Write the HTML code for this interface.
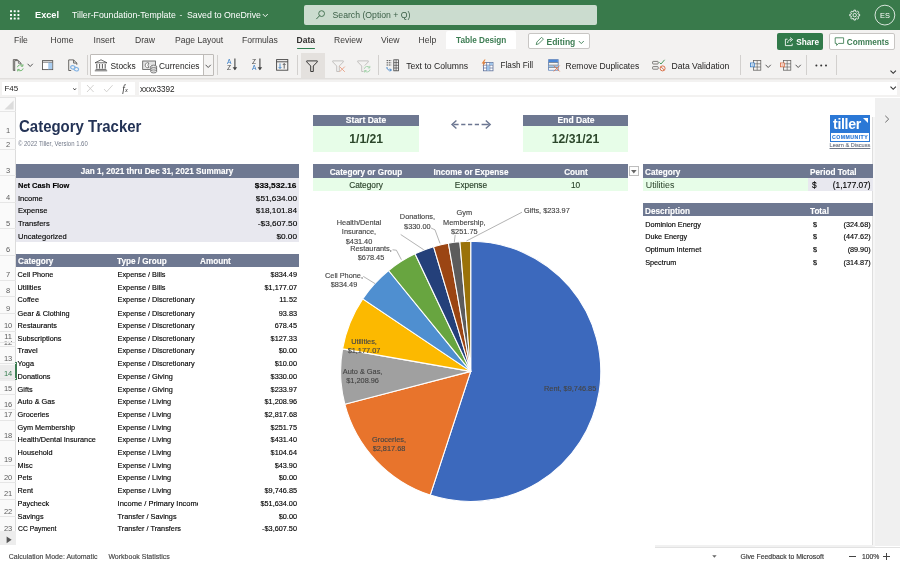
<!DOCTYPE html>
<html><head><meta charset="utf-8"><title>Excel</title>
<style>
html,body{margin:0;padding:0;}
body{width:900px;height:563px;overflow:hidden;position:relative;background:#fff;font-family:"Liberation Sans", sans-serif;}
.t{position:absolute;white-space:nowrap;}
.s{-webkit-text-stroke:0.14px;}
.r{position:absolute;}
svg{position:absolute;overflow:visible;}
</style></head><body><div id="app" style="position:absolute;left:0;top:0;width:900px;height:563px;will-change:transform;">

<div class="r" style="left:0px;top:0px;width:900px;height:30px;background:#397a4b;"></div>
<svg width="900" height="30" style="left:0;top:0"><rect x="10.0" y="10.2" width="2" height="2" rx="0.4" fill="#fff"/><rect x="10.0" y="13.9" width="2" height="2" rx="0.4" fill="#fff"/><rect x="10.0" y="17.6" width="2" height="2" rx="0.4" fill="#fff"/><rect x="13.7" y="10.2" width="2" height="2" rx="0.4" fill="#fff"/><rect x="13.7" y="13.9" width="2" height="2" rx="0.4" fill="#fff"/><rect x="13.7" y="17.6" width="2" height="2" rx="0.4" fill="#fff"/><rect x="17.4" y="10.2" width="2" height="2" rx="0.4" fill="#fff"/><rect x="17.4" y="13.9" width="2" height="2" rx="0.4" fill="#fff"/><rect x="17.4" y="17.6" width="2" height="2" rx="0.4" fill="#fff"/></svg>
<div class="t" style="left:35px;top:9.0px;font-size:9.2px;line-height:12px;font-weight:bold;color:#fff;">Excel</div>
<div class="t" style="left:72px;top:9.0px;font-size:8.75px;line-height:12px;font-weight:normal;color:#fff;">Tiller-Foundation-Template</div>
<div class="t" style="left:179.5px;top:9.0px;font-size:8.75px;line-height:12px;font-weight:normal;color:#e6f0e9;">-</div>
<div class="t" style="left:187px;top:9.0px;font-size:8.75px;line-height:12px;font-weight:normal;color:#fff;">Saved to OneDrive</div>
<svg width="8" height="6" style="left:262px;top:13px"><path d="M0.8 1 L3.3 3.6 L5.8 1" fill="none" stroke="#fff" stroke-width="0.9"/></svg>
<div class="r" style="left:304px;top:5px;width:293px;height:20px;background:#cbdccf;border-radius:2px;"></div>
<svg width="12" height="12" style="left:314.8px;top:9.2px"><circle cx="6.6" cy="4.6" r="2.9" fill="none" stroke="#3b6b4a" stroke-width="0.9"/><path d="M4.5 6.8 L1.6 9.8" stroke="#3b6b4a" stroke-width="1" stroke-linecap="round"/></svg>
<div class="t" style="left:332.5px;top:9.0px;font-size:8.7px;line-height:12px;font-weight:normal;color:#3b5f47;">Search (Option + Q)</div>
<svg width="900" height="30" style="left:0;top:0"><g transform="translate(854.7,15.1)"><path d="M-0.96 -3.47 L-0.85 -4.93 L0.85 -4.93 L0.96 -3.47 L1.77 -3.13 L2.89 -4.08 L4.08 -2.89 L3.13 -1.77 L3.47 -0.96 L4.93 -0.85 L4.93 0.85 L3.47 0.96 L3.13 1.77 L4.08 2.89 L2.89 4.08 L1.77 3.13 L0.96 3.47 L0.85 4.93 L-0.85 4.93 L-0.96 3.47 L-1.77 3.13 L-2.89 4.08 L-4.08 2.89 L-3.13 1.77 L-3.47 0.96 L-4.93 0.85 L-4.93 -0.85 L-3.47 -0.96 L-3.13 -1.77 L-4.08 -2.89 L-2.89 -4.08 L-1.77 -3.13 Z" fill="none" stroke="#fff" stroke-width="0.85" stroke-linejoin="round"/><circle r="1.7" fill="none" stroke="#fff" stroke-width="0.85"/></g><circle cx="884.9" cy="15.1" r="9.9" fill="none" stroke="#fff" stroke-width="0.8"/></svg>
<div class="t" style="left:734.9px;width:300px;text-align:center;top:9.5px;font-size:7.4px;line-height:12px;font-weight:normal;color:#fff;">ES</div>
<div class="r" style="left:0px;top:30px;width:900px;height:67px;background:#f3f2f1;"></div>
<div class="t" style="left:14px;top:34.0px;font-size:8.6px;line-height:12px;font-weight:normal;color:#3b3a39;">File</div>
<div class="t" style="left:50.5px;top:34.0px;font-size:8.6px;line-height:12px;font-weight:normal;color:#3b3a39;">Home</div>
<div class="t" style="left:93.5px;top:34.0px;font-size:8.6px;line-height:12px;font-weight:normal;color:#3b3a39;">Insert</div>
<div class="t" style="left:135px;top:34.0px;font-size:8.6px;line-height:12px;font-weight:normal;color:#3b3a39;">Draw</div>
<div class="t" style="left:175px;top:34.0px;font-size:8.6px;line-height:12px;font-weight:normal;color:#3b3a39;">Page Layout</div>
<div class="t" style="left:242px;top:34.0px;font-size:8.6px;line-height:12px;font-weight:normal;color:#3b3a39;">Formulas</div>
<div class="t" style="left:334px;top:34.0px;font-size:8.6px;line-height:12px;font-weight:normal;color:#3b3a39;">Review</div>
<div class="t" style="left:381px;top:34.0px;font-size:8.6px;line-height:12px;font-weight:normal;color:#3b3a39;">View</div>
<div class="t" style="left:418.5px;top:34.0px;font-size:8.6px;line-height:12px;font-weight:normal;color:#3b3a39;">Help</div>
<div class="t" style="left:296.6px;top:34.0px;font-size:8.5px;line-height:12px;font-weight:bold;color:#323130;">Data</div>
<div class="r" style="left:296.5px;top:47.8px;width:18.6px;height:1.7px;background:#2e7d4f;border-radius:1px;"></div>
<div class="r" style="left:446.3px;top:31px;width:69.4px;height:18.4px;background:#fff;border-radius:2px 2px 0 0;"></div>
<div class="t" style="left:456px;top:34.5px;font-size:8.2px;line-height:12px;font-weight:bold;color:#3d7d53;">Table Design</div>
<div class="r" style="left:528.3px;top:32.5px;width:61.3px;height:16.9px;background:#fff;border:0.8px solid #c8c6c4;border-radius:2px;box-sizing:border-box;"></div>
<svg width="10" height="10" style="left:535px;top:36px"><path d="M1.2 8.6 L1.9 6 L6.6 1.3 L8.4 3.1 L3.7 7.8 Z" fill="none" stroke="#3d7d53" stroke-width="0.85" stroke-linejoin="round"/></svg>
<div class="t" style="left:546.5px;top:36.0px;font-size:8.5px;line-height:12px;font-weight:bold;color:#3d7d53;">Editing</div>
<svg width="8" height="6" style="left:578px;top:39.5px"><path d="M0.8 1 L3.3 3.6 L5.8 1" fill="none" stroke="#3d7d53" stroke-width="0.9"/></svg>
<div class="r" style="left:777.3px;top:32.6px;width:46px;height:17.3px;background:#317a4a;border-radius:2px;"></div>
<svg width="12" height="12" style="left:783.5px;top:35.5px"><path d="M3.5 3.2 H1.4 V9.6 H8.2 V7.6" fill="none" stroke="#fff" stroke-width="0.85"/><path d="M3.6 7 C3.8 4.6 5.2 3.5 7.2 3.5 M6 1.6 L8.6 3.5 L6 5.6" fill="none" stroke="#fff" stroke-width="0.85" stroke-linejoin="round"/></svg>
<div class="t" style="left:796.3px;top:36.5px;font-size:8.2px;line-height:12px;font-weight:bold;color:#fff;">Share</div>
<div class="r" style="left:828.5px;top:32.7px;width:66.3px;height:17px;background:#fff;border:0.8px solid #c8c6c4;border-radius:2px;box-sizing:border-box;"></div>
<svg width="12" height="12" style="left:834px;top:35.5px"><path d="M1.2 1.8 H9.6 V7.4 H4.6 L2.6 9.4 V7.4 H1.2 Z" fill="none" stroke="#3d7d53" stroke-width="0.85" stroke-linejoin="round"/></svg>
<div class="t" style="left:846.8px;top:36.5px;font-size:8.2px;line-height:12px;font-weight:bold;color:#3d7d53;">Comments</div>
<svg width="40" height="80" style="left:0;top:-0px">
<path d="M17.6 59.6 H13.3 V70.4 H15.2" fill="none" stroke="#5a5856" stroke-width="0.9"/>
<path d="M14.7 70.4 V60.6 H18.4 L21 63.3 V64.8" fill="none" stroke="#5a5856" stroke-width="0.9"/>
<path d="M18.4 60.6 V63.3 H21" fill="none" stroke="#5a5856" stroke-width="0.7"/>
<path d="M17.4 67.2 A3 3 0 0 1 22.6 65.9 M22.9 64.2 V66.2 H20.9" fill="none" stroke="#6cb56c" stroke-width="0.95"/>
<path d="M23.2 68.4 A3 3 0 0 1 18 69.7 M17.7 71.4 V69.4 H19.7" fill="none" stroke="#6cb56c" stroke-width="0.95"/>
</svg>
<svg width="8" height="6" style="left:26.6px;top:63.3px"><path d="M0.6 0.8 L3.2 3.5 L5.8 0.8" fill="none" stroke="#444" stroke-width="0.9"/></svg>
<svg width="60" height="80" style="left:0;top:-0px"><rect x="42.5" y="60.6" width="10.2" height="9" fill="#fff" stroke="#5a5856" stroke-width="0.9"/><rect x="48.9" y="62.6" width="3.3" height="6.5" fill="#a9cdf0"/><path d="M42.5 62.2 H52.7" stroke="#5a5856" stroke-width="0.8"/><path d="M48.6 62.2 V69.6" stroke="#8fb8e0" stroke-width="0.6"/></svg>
<svg width="90" height="80" style="left:0;top:-0px"><path d="M71.2 70.5 H68.7 V59.9 H73.6 L76.8 63.1 V64.8 M73.6 59.9 V63.1 H76.8" fill="none" stroke="#5a5856" stroke-width="0.9"/><ellipse cx="72.9" cy="67.4" rx="2.3" ry="1.7" fill="none" stroke="#7fb2e5" stroke-width="1.1" transform="rotate(18 72.9 67.4)"/><ellipse cx="76.3" cy="69.2" rx="2.3" ry="1.7" fill="none" stroke="#7fb2e5" stroke-width="1.1" transform="rotate(18 76.3 69.2)"/></svg>
<div class="r" style="left:87px;top:55px;width:0.8px;height:20px;background:#d2d0ce;"></div>
<div class="r" style="left:90.3px;top:53.6px;width:123.5px;height:22.2px;background:#fff;border:1px solid #bebbb8;box-sizing:border-box;border-radius:1px;"></div>
<div class="r" style="left:203px;top:54.6px;width:0.9px;height:20.4px;background:#bebbb8;"></div>
<div class="r" style="left:203.9px;top:54.7px;width:8.9px;height:20.2px;background:#f5f4f3;"></div>
<svg width="16" height="14" style="left:94.2px;top:58.5px"><path d="M1 3.8 L7 0.8 L13 3.8 Z" fill="none" stroke="#444" stroke-width="0.8" stroke-linejoin="round"/><path d="M2.8 5 V9.6 M5.6 5 V9.6 M8.4 5 V9.6 M11.2 5 V9.6" stroke="#444" stroke-width="0.9"/><path d="M1.6 10.4 H12.4 M0.8 11.8 H13.2" stroke="#444" stroke-width="0.8"/></svg>
<div class="t" style="left:110.5px;top:60.0px;font-size:8.4px;line-height:12px;font-weight:normal;color:#252423;">Stocks</div>
<svg width="18" height="16" style="left:142px;top:59.7px"><rect x="0.7" y="1" width="12.8" height="8.4" fill="#e3e3e3" stroke="#555" stroke-width="0.8"/><path d="M6.9 3 A2.5 2.5 0 1 0 6.9 7.4 A3.2 3.2 0 0 1 6.9 3 Z" fill="#fff" stroke="#555" stroke-width="0.7"/><rect x="8.4" y="5" width="6.8" height="8.6" fill="#fff" stroke="none"/><path d="M8.8 6.4 V11.8 A2.9 1.1 0 0 0 14.6 11.8 V6.4" fill="#fff" stroke="#555" stroke-width="0.8"/><ellipse cx="11.7" cy="6.3" rx="2.9" ry="1.1" fill="#fff" stroke="#555" stroke-width="0.8"/><path d="M8.8 8.1 A2.9 1.1 0 0 0 14.6 8.1 M8.8 9.9 A2.9 1.1 0 0 0 14.6 9.9" fill="none" stroke="#555" stroke-width="0.7"/></svg>
<div class="t" style="left:159px;top:60.0px;font-size:8.4px;line-height:12px;font-weight:normal;color:#252423;">Currencies</div>
<svg width="8" height="6" style="left:205.3px;top:63.6px"><path d="M0.6 0.8 L3.2 3.5 L5.8 0.8" fill="none" stroke="#444" stroke-width="0.9"/></svg>
<div class="r" style="left:216.6px;top:55px;width:0.8px;height:20px;background:#d2d0ce;"></div>
<svg width="14" height="16" style="left:227px;top:57.3px"><text x="0" y="6.6" font-family='"Liberation Sans", sans-serif' font-size="6.6" fill="#2f78c4">A</text><text x="0" y="13.2" font-family='"Liberation Sans", sans-serif' font-size="6.6" fill="#444">Z</text><path d="M7.9 1.6 V12.6" fill="none" stroke="#444" stroke-width="1.1"/><path d="M5.6 10.2 L7.9 13.3 L10.2 10.2 Z" fill="#444"/></svg>
<svg width="14" height="16" style="left:251.5px;top:57.3px"><text x="0" y="6.6" font-family='"Liberation Sans", sans-serif' font-size="6.6" fill="#444">Z</text><text x="0" y="13.2" font-family='"Liberation Sans", sans-serif' font-size="6.6" fill="#2f78c4">A</text><path d="M7.9 1.6 V12.6" fill="none" stroke="#444" stroke-width="1.1"/><path d="M5.6 10.2 L7.9 13.3 L10.2 10.2 Z" fill="#444"/></svg>
<svg width="14" height="14" style="left:276px;top:59.2px"><rect x="0.6" y="0.6" width="11.2" height="10.6" fill="none" stroke="#444" stroke-width="0.9"/><path d="M0.6 2.8 H11.8" stroke="#444" stroke-width="0.9"/><path d="M4 4.4 V9.4 M2.6 8 L4 9.5 L5.4 8" fill="none" stroke="#2f78c4" stroke-width="0.8"/><path d="M8.2 9.6 V4.6 M6.8 6 L8.2 4.5 L9.6 6" fill="none" stroke="#444" stroke-width="0.8"/></svg>
<div class="r" style="left:297px;top:55px;width:0.8px;height:20px;background:#d2d0ce;"></div>
<div class="r" style="left:300.6px;top:52.5px;width:24.4px;height:25.2px;background:#e4e1de;"></div>
<svg width="16" height="14" style="left:306.3px;top:59.7px"><path d="M0.7 0.9 H11.3 V1.9 L7.3 6 V11.5 H4.7 V6 L0.7 1.9 Z" fill="none" stroke="#3b3a39" stroke-width="1" stroke-linejoin="round"/></svg>
<svg width="16" height="14" style="left:331.8px;top:59.7px"><path d="M0.7 0.9 H11.3 V1.9 L7.3 6 V11.5 H4.7 V6 L0.7 1.9 Z" fill="none" stroke="#c3c1bf" stroke-width="1" stroke-linejoin="round"/><path d="M7.6 6.6 L12.8 11.8 M12.8 6.6 L7.6 11.8" stroke="#eaa78e" stroke-width="1"/></svg>
<svg width="16" height="14" style="left:356.8px;top:59.7px"><path d="M0.7 0.9 H11.3 V1.9 L7.3 6 V11.5 H4.7 V6 L0.7 1.9 Z" fill="none" stroke="#c3c1bf" stroke-width="1" stroke-linejoin="round"/><rect x="6.6" y="5.6" width="7" height="7" fill="#f3f2f1"/><path d="M7.4 8.8 A2.9 2.9 0 0 1 12.6 7.6 M12.8 5.9 V7.9 H10.8 M13 9.6 A2.9 2.9 0 0 1 7.8 10.8 M7.6 12.5 V10.5 H9.6" fill="none" stroke="#a3d3ab" stroke-width="0.95"/></svg>
<div class="r" style="left:378px;top:55px;width:0.8px;height:20px;background:#d2d0ce;"></div>
<svg width="16" height="14" style="left:386px;top:59.2px"><path d="M0.6 1.6 H5.4 M0.6 3.8 H5.4 M0.6 6 H5.4" stroke="#444" stroke-width="0.9" stroke-dasharray="1.6 0.7"/><rect x="7.8" y="0.8" width="4.6" height="11" fill="none" stroke="#444" stroke-width="0.8"/><path d="M10.1 0.8 V11.8 M7.8 3.6 H12.4 M7.8 6.3 H12.4 M7.8 9 H12.4" stroke="#444" stroke-width="0.7"/><path d="M1 8 A2.4 2.4 0 0 0 3.4 11 H5.2 M4 9.6 L5.4 11 L4 12.4" fill="none" stroke="#2f78c4" stroke-width="0.9"/></svg>
<div class="t" style="left:406.2px;top:60.0px;font-size:8.65px;line-height:12px;font-weight:normal;color:#252423;">Text to Columns</div>
<svg width="14" height="14" style="left:481.2px;top:58.5px"><rect x="2.4" y="3.4" width="9.6" height="8.4" fill="#fff" stroke="#5b6f9a" stroke-width="0.8"/><path d="M2.4 6.2 H12 M2.4 9 H12 M5.6 3.4 V11.8 M8.8 3.4 V11.8" stroke="#5b6f9a" stroke-width="0.7"/><rect x="5.9" y="6.5" width="2.6" height="5" fill="#9cc3ea"/><rect x="9.1" y="3.8" width="2.6" height="2.2" fill="#9cc3ea"/><path d="M3.4 0.4 L0.6 4.4 H2.6 L1.4 7.6 L5 3.2 H3 L4.6 0.4 Z" fill="#e8833a"/></svg>
<div class="t" style="left:500.6px;top:59.5px;font-size:8.15px;line-height:12px;font-weight:normal;color:#252423;">Flash Fill</div>
<svg width="14" height="14" style="left:548px;top:59.2px"><rect x="0.6" y="0.6" width="9.6" height="10.6" fill="#fff" stroke="#5b7fb8" stroke-width="0.8"/><rect x="0.9" y="0.9" width="9" height="2.6" fill="#4a86d8"/><rect x="0.9" y="6.2" width="9" height="2.4" fill="#9cc3ea"/><path d="M0.6 3.6 H10.2 M0.6 6 H10.2 M0.6 8.6 H10.2" stroke="#605e5c" stroke-width="0.6"/><path d="M5.8 6.6 L11.6 12.4 M11.6 6.6 L5.8 12.4" stroke="#e07a52" stroke-width="1"/></svg>
<div class="t" style="left:565.5px;top:60.0px;font-size:8.5px;line-height:12px;font-weight:normal;color:#252423;">Remove Duplicates</div>
<svg width="16" height="14" style="left:652px;top:59.2px"><rect x="0.6" y="2.4" width="5.6" height="2.6" rx="0.6" fill="none" stroke="#605e5c" stroke-width="0.8"/><rect x="0.6" y="7.6" width="5.6" height="2.6" rx="0.6" fill="none" stroke="#605e5c" stroke-width="0.8"/><path d="M7.4 3.4 L9 5 L12.6 0.8" fill="none" stroke="#4e9a5e" stroke-width="1"/><circle cx="10.6" cy="9.4" r="2.5" fill="none" stroke="#d8653a" stroke-width="0.9"/><path d="M8.9 7.7 L12.3 11.1" stroke="#d8653a" stroke-width="0.9"/></svg>
<div class="t" style="left:671.5px;top:60.0px;font-size:8.65px;line-height:12px;font-weight:normal;color:#252423;">Data Validation</div>
<div class="r" style="left:740px;top:55px;width:0.8px;height:20px;background:#d2d0ce;"></div>
<svg width="14" height="12" style="left:750px;top:60.2px"><rect x="3.6" y="0.6" width="7.2" height="9.6" fill="none" stroke="#605e5c" stroke-width="0.75"/><path d="M3.6 3.8 H10.8 M3.6 7 H10.8 M7.2 0.6 V10.2" stroke="#605e5c" stroke-width="0.65"/><rect x="0.5" y="3" width="3.8" height="3.8" fill="#fff" stroke="#2f78c4" stroke-width="0.8"/><path d="M1.4 5 H3.6" stroke="#2f78c4" stroke-width="0.8"/></svg>
<svg width="8" height="6" style="left:765px;top:63.5px"><path d="M0.6 0.8 L3.2 3.5 L5.8 0.8" fill="none" stroke="#444" stroke-width="0.9"/></svg>
<svg width="14" height="12" style="left:780px;top:60.2px"><rect x="3.6" y="0.6" width="7.2" height="9.6" fill="none" stroke="#605e5c" stroke-width="0.75"/><path d="M3.6 3.8 H10.8 M3.6 7 H10.8 M7.2 0.6 V10.2" stroke="#605e5c" stroke-width="0.65"/><rect x="0.5" y="3" width="3.8" height="3.8" fill="#fff" stroke="#d8653a" stroke-width="0.8"/><path d="M1.4 5 H3.6" stroke="#d8653a" stroke-width="0.8"/></svg>
<svg width="8" height="6" style="left:795px;top:63.5px"><path d="M0.6 0.8 L3.2 3.5 L5.8 0.8" fill="none" stroke="#444" stroke-width="0.9"/></svg>
<div class="r" style="left:806px;top:55px;width:0.8px;height:20px;background:#d2d0ce;"></div>
<svg width="16" height="4" style="left:815px;top:64.2px"><circle cx="1.4" cy="1.5" r="1" fill="#333"/><circle cx="6.2" cy="1.5" r="1" fill="#333"/><circle cx="11" cy="1.5" r="1" fill="#333"/></svg>
<div class="r" style="left:836px;top:55px;width:0.8px;height:20px;background:#d2d0ce;"></div>
<svg width="8" height="6" style="left:889.8px;top:70.3px"><path d="M0.5 0.6 L3.2 3.3 L5.9 0.6" fill="none" stroke="#333" stroke-width="1.1"/></svg>
<div class="r" style="left:0px;top:78px;width:900px;height:1px;background:#e1dfdd;"></div>
<div class="r" style="left:0px;top:79px;width:900px;height:1.2px;background:#ebe9e7;"></div>
<div class="r" style="left:2px;top:81.7px;width:76px;height:13.3px;background:#fff;"></div>
<div class="r" style="left:81px;top:81.7px;width:54px;height:13.3px;background:#fff;"></div>
<div class="r" style="left:138.5px;top:81.7px;width:758.8px;height:13.3px;background:#fff;"></div>
<div class="t" style="left:4.4px;top:82.5px;font-size:8.0px;line-height:12px;font-weight:normal;color:#252423;">F45</div>
<svg width="6" height="4" style="left:72.6px;top:87.6px"><path d="M0.4 0.4 L1.7 1.9 L3 0.4" fill="none" stroke="#333" stroke-width="1"/></svg>
<svg width="10" height="10" style="left:86px;top:84px"><path d="M1 1 L7.6 8 M7.6 1 L1 8" stroke="#c8c6c4" stroke-width="0.8"/></svg>
<svg width="12" height="10" style="left:103px;top:84px"><path d="M1 5 L3.6 7.8 L9.6 1.2" fill="none" stroke="#c8c6c4" stroke-width="0.8"/></svg>
<div class="t" style="left:122.3px;top:82.5px;font-size:9.6px;line-height:12px;font-weight:normal;color:#333;font-family:'Liberation Serif',serif;"><i>f</i><span style="font-size:6.4px"><i>x</i></span></div>
<div class="t" style="left:140px;top:83.5px;font-size:8.2px;line-height:12px;font-weight:normal;color:#252423;">xxxx3392</div>
<svg width="8" height="6" style="left:889.8px;top:85.6px"><path d="M0.5 0.6 L3.2 3.3 L5.9 0.6" fill="none" stroke="#333" stroke-width="1.1"/></svg>
<div class="r" style="left:0px;top:97px;width:900px;height:466px;background:#fff;"></div>
<div class="r" style="left:0px;top:98px;width:15.5px;height:433px;background:#fafafa;"></div>
<div class="r" style="left:15.3px;top:98px;width:0.8px;height:433px;background:#dcdcdc;"></div>
<div class="r" style="left:0px;top:97px;width:16px;height:0.8px;background:#e4e4e4;"></div>
<svg width="16" height="14" style="left:0;top:98px"><path d="M13.6 2.6 V11.6 H4.4 Z" fill="#dcdcdc"/></svg>
<div class="t" style="left:-141.9px;width:300px;text-align:center;top:124.5px;font-size:7.5px;line-height:12px;font-weight:normal;color:#5c5c5c;">1</div>
<div class="t" style="left:-141.9px;width:300px;text-align:center;top:138.5px;font-size:7.5px;line-height:12px;font-weight:normal;color:#5c5c5c;">2</div>
<div class="t" style="left:-141.9px;width:300px;text-align:center;top:164.5px;font-size:7.5px;line-height:12px;font-weight:normal;color:#5c5c5c;">3</div>
<div class="t" style="left:-141.9px;width:300px;text-align:center;top:191.5px;font-size:7.5px;line-height:12px;font-weight:normal;color:#5c5c5c;">4</div>
<div class="t" style="left:-141.9px;width:300px;text-align:center;top:217.5px;font-size:7.5px;line-height:12px;font-weight:normal;color:#5c5c5c;">5</div>
<div class="t" style="left:-141.9px;width:300px;text-align:center;top:243.5px;font-size:7.5px;line-height:12px;font-weight:normal;color:#5c5c5c;">6</div>
<div class="t" style="left:-141.9px;width:300px;text-align:center;top:268.5px;font-size:7.5px;line-height:12px;font-weight:normal;color:#5c5c5c;">7</div>
<div class="t" style="left:-141.9px;width:300px;text-align:center;top:284.5px;font-size:7.5px;line-height:12px;font-weight:normal;color:#5c5c5c;">8</div>
<div class="t" style="left:-141.9px;width:300px;text-align:center;top:302.5px;font-size:7.5px;line-height:12px;font-weight:normal;color:#5c5c5c;">9</div>
<div class="t" style="left:-141.9px;width:300px;text-align:center;top:319.5px;font-size:7.5px;line-height:12px;font-weight:normal;color:#5c5c5c;">10</div>
<div class="t" style="left:-141.9px;width:300px;text-align:center;top:330.5px;font-size:7.5px;line-height:12px;font-weight:normal;color:#5c5c5c;">11</div>
<div class="t" style="left:-141.9px;width:300px;text-align:center;top:352.5px;font-size:7.5px;line-height:12px;font-weight:normal;color:#5c5c5c;">13</div>
<div class="t" style="left:-141.9px;width:300px;text-align:center;top:382.5px;font-size:7.5px;line-height:12px;font-weight:normal;color:#5c5c5c;">15</div>
<div class="t" style="left:-141.9px;width:300px;text-align:center;top:398.5px;font-size:7.5px;line-height:12px;font-weight:normal;color:#5c5c5c;">16</div>
<div class="t" style="left:-141.9px;width:300px;text-align:center;top:408.5px;font-size:7.5px;line-height:12px;font-weight:normal;color:#5c5c5c;">17</div>
<div class="t" style="left:-141.9px;width:300px;text-align:center;top:429.5px;font-size:7.5px;line-height:12px;font-weight:normal;color:#5c5c5c;">18</div>
<div class="t" style="left:-141.9px;width:300px;text-align:center;top:453.5px;font-size:7.5px;line-height:12px;font-weight:normal;color:#5c5c5c;">19</div>
<div class="t" style="left:-141.9px;width:300px;text-align:center;top:471.5px;font-size:7.5px;line-height:12px;font-weight:normal;color:#5c5c5c;">20</div>
<div class="t" style="left:-141.9px;width:300px;text-align:center;top:487.5px;font-size:7.5px;line-height:12px;font-weight:normal;color:#5c5c5c;">21</div>
<div class="t" style="left:-141.9px;width:300px;text-align:center;top:505.5px;font-size:7.5px;line-height:12px;font-weight:normal;color:#5c5c5c;">22</div>
<div class="t" style="left:-141.9px;width:300px;text-align:center;top:522.5px;font-size:7.5px;line-height:12px;font-weight:normal;color:#5c5c5c;">23</div>
<div class="r" style="left:0;top:341px;width:15px;height:4.6px;overflow:hidden"><div class="t" style="left:0;width:16px;text-align:center;top:-2.6px;font-size:7.5px;line-height:10px;color:#5c5c5c">12</div></div>
<div class="r" style="left:0px;top:364.5px;width:15.2px;height:16.5px;background:#ececec;"></div>
<div class="r" style="left:15.2px;top:361.6px;width:1.4px;height:18.6px;background:#3d7d53;"></div>
<div class="t" style="left:-141.9px;width:300px;text-align:center;top:367.5px;font-size:7.5px;line-height:12px;font-weight:normal;color:#2f7a4a;">14</div>
<div class="r" style="left:0px;top:110.9px;width:15.6px;height:0.7px;background:#e6e6e6;"></div>
<div class="r" style="left:0px;top:138.3px;width:15.6px;height:0.7px;background:#e6e6e6;"></div>
<div class="r" style="left:0px;top:149.3px;width:15.6px;height:0.7px;background:#e6e6e6;"></div>
<div class="r" style="left:0px;top:175.3px;width:15.6px;height:0.7px;background:#e6e6e6;"></div>
<div class="r" style="left:0px;top:202.3px;width:15.6px;height:0.7px;background:#e6e6e6;"></div>
<div class="r" style="left:0px;top:228.3px;width:15.6px;height:0.7px;background:#e6e6e6;"></div>
<div class="r" style="left:0px;top:254.6px;width:15.6px;height:0.7px;background:#e6e6e6;"></div>
<div class="r" style="left:0px;top:279.5px;width:15.6px;height:0.7px;background:#e6e6e6;"></div>
<div class="r" style="left:0px;top:295.8px;width:15.6px;height:0.7px;background:#e6e6e6;"></div>
<div class="r" style="left:0px;top:313.3px;width:15.6px;height:0.7px;background:#e6e6e6;"></div>
<div class="r" style="left:0px;top:330.6px;width:15.6px;height:0.7px;background:#e6e6e6;"></div>
<div class="r" style="left:0px;top:341.7px;width:15.6px;height:0.7px;background:#e6e6e6;"></div>
<div class="r" style="left:0px;top:363.3px;width:15.6px;height:0.7px;background:#e6e6e6;"></div>
<div class="r" style="left:0px;top:394.1px;width:15.6px;height:0.7px;background:#e6e6e6;"></div>
<div class="r" style="left:0px;top:409.3px;width:15.6px;height:0.7px;background:#e6e6e6;"></div>
<div class="r" style="left:0px;top:419.8px;width:15.6px;height:0.7px;background:#e6e6e6;"></div>
<div class="r" style="left:0px;top:440.3px;width:15.6px;height:0.7px;background:#e6e6e6;"></div>
<div class="r" style="left:0px;top:464.6px;width:15.6px;height:0.7px;background:#e6e6e6;"></div>
<div class="r" style="left:0px;top:482.3px;width:15.6px;height:0.7px;background:#e6e6e6;"></div>
<div class="r" style="left:0px;top:498.9px;width:15.6px;height:0.7px;background:#e6e6e6;"></div>
<div class="r" style="left:0px;top:516.3px;width:15.6px;height:0.7px;background:#e6e6e6;"></div>
<div class="r" style="left:0px;top:533.8px;width:15.6px;height:0.7px;background:#e6e6e6;"></div>
<div class="r" style="left:0px;top:346.2px;width:15.6px;height:0.7px;background:#e6e6e6;"></div>
<div class="r" style="left:0px;top:378.3px;width:15.6px;height:0.7px;background:#e6e6e6;"></div>
<div class="r" style="left:0px;top:531px;width:15.5px;height:14.2px;background:#ededed;"></div>
<svg width="8" height="8" style="left:5.5px;top:536px"><path d="M0.6 0.4 L5.6 3.8 L0.6 7.2 Z" fill="#555"/></svg>
<div class="r" style="left:874.6px;top:98px;width:25.4px;height:448px;background:#f0f0f0;"></div>
<div class="r" style="left:872px;top:116.5px;width:0.8px;height:430px;background:#dedede;"></div>
<div class="r" style="left:872.8px;top:116.5px;width:1.8px;height:430px;background:#f6f6f6;"></div>
<svg width="8" height="10" style="left:884.4px;top:113.6px"><path d="M1.3 1.8 L4.7 5.1 L1.3 8.4" fill="none" stroke="#6a6a6a" stroke-width="1"/></svg>
<div class="r" style="left:655px;top:545px;width:218px;height:2.4px;background:#f1f1f1;"></div>
<div class="r" style="left:655px;top:547.2px;width:245px;height:0.8px;background:#e2e2e2;"></div>
<div class="t s" style="left:19px;top:120.5px;font-size:15.7px;line-height:12px;font-weight:bold;color:#243356;transform:scaleX(0.955);transform-origin:0 0;-webkit-text-stroke:0;">Category Tracker</div>
<div class="t s" style="left:18px;top:137.5px;font-size:6.6px;line-height:12px;font-weight:normal;color:#737a8a;transform:scaleX(0.905);transform-origin:0 0;-webkit-text-stroke:0;">© 2022 Tiller, Version 1.60</div>
<div class="r" style="left:16.3px;top:163.8px;width:282.3px;height:14px;background:#6e7891;"></div>
<div class="t s" style="left:7.3px;width:300px;text-align:center;top:165.0px;font-size:8.7px;line-height:12px;font-weight:bold;color:#fff;transform:scaleX(0.94);transform-origin:50% 0;">Jan 1, 2021 thru Dec 31, 2021 Summary</div>
<div class="r" style="left:16.3px;top:177.8px;width:282.3px;height:64.6px;background:#e8e8ef;"></div>
<div class="t s" style="left:17.8px;top:179.5px;font-size:7.7px;line-height:12px;font-weight:bold;color:#000;transform:scaleX(0.97);transform-origin:0 0;">Net Cash Flow</div>
<div class="t s" style="right:603px;top:179.5px;font-size:8.1px;line-height:12px;font-weight:bold;color:#000;transform:scaleX(1.03);transform-origin:100% 0;">$33,532.16</div>
<div class="t s" style="left:17.8px;top:192.5px;font-size:7.8px;line-height:12px;font-weight:normal;color:#000;transform:scaleX(0.97);transform-origin:0 0;">Income</div>
<div class="t s" style="right:603px;top:192.5px;font-size:8.0px;line-height:12px;font-weight:normal;color:#000;transform:scaleX(1.03);transform-origin:100% 0;">$51,634.00</div>
<div class="t s" style="left:17.8px;top:204.5px;font-size:7.8px;line-height:12px;font-weight:normal;color:#000;transform:scaleX(0.97);transform-origin:0 0;">Expense</div>
<div class="t s" style="right:603px;top:204.5px;font-size:8.0px;line-height:12px;font-weight:normal;color:#000;transform:scaleX(1.03);transform-origin:100% 0;">$18,101.84</div>
<div class="t s" style="left:17.8px;top:217.5px;font-size:7.8px;line-height:12px;font-weight:normal;color:#000;transform:scaleX(0.97);transform-origin:0 0;">Transfers</div>
<div class="t s" style="right:603px;top:217.5px;font-size:8.0px;line-height:12px;font-weight:normal;color:#000;transform:scaleX(1.03);transform-origin:100% 0;">-$3,607.50</div>
<div class="t s" style="left:17.8px;top:230.5px;font-size:7.8px;line-height:12px;font-weight:normal;color:#000;transform:scaleX(0.97);transform-origin:0 0;">Uncategorized</div>
<div class="t s" style="right:603px;top:230.5px;font-size:8.0px;line-height:12px;font-weight:normal;color:#000;transform:scaleX(1.03);transform-origin:100% 0;">$0.00</div>
<div class="r" style="left:16.3px;top:254.2px;width:282.3px;height:13px;background:#6e7891;"></div>
<div class="t s" style="left:17.6px;top:255.0px;font-size:8.7px;line-height:12px;font-weight:bold;color:#fff;transform:scaleX(0.94);transform-origin:0 0;">Category</div>
<div class="t s" style="left:117.2px;top:255.0px;font-size:8.7px;line-height:12px;font-weight:bold;color:#fff;transform:scaleX(0.94);transform-origin:0 0;">Type / Group</div>
<div class="t s" style="left:200px;top:255.0px;font-size:8.7px;line-height:12px;font-weight:bold;color:#fff;transform:scaleX(0.94);transform-origin:0 0;">Amount</div>
<div class="t s" style="left:17.6px;top:268.5px;font-size:7.3px;line-height:12px;font-weight:normal;color:#000;">Cell Phone</div>
<div class="t s" style="left:117.6px;top:268.5px;font-size:7.3px;line-height:12px;font-weight:normal;color:#000;">Expense / Bills</div>
<div class="t s" style="right:603px;top:268.5px;font-size:7.3px;line-height:12px;font-weight:normal;color:#000;">$834.49</div>
<div class="t s" style="left:17.6px;top:281.5px;font-size:7.3px;line-height:12px;font-weight:normal;color:#000;">Utilities</div>
<div class="t s" style="left:117.6px;top:281.5px;font-size:7.3px;line-height:12px;font-weight:normal;color:#000;">Expense / Bills</div>
<div class="t s" style="right:603px;top:281.5px;font-size:7.3px;line-height:12px;font-weight:normal;color:#000;">$1,177.07</div>
<div class="t s" style="left:17.6px;top:293.5px;font-size:7.3px;line-height:12px;font-weight:normal;color:#000;">Coffee</div>
<div class="t s" style="left:117.6px;top:293.5px;font-size:7.3px;line-height:12px;font-weight:normal;color:#000;">Expense / Discretionary</div>
<div class="t s" style="right:603px;top:293.5px;font-size:7.3px;line-height:12px;font-weight:normal;color:#000;">11.52</div>
<div class="t s" style="left:17.6px;top:307.5px;font-size:7.3px;line-height:12px;font-weight:normal;color:#000;">Gear &amp; Clothing</div>
<div class="t s" style="left:117.6px;top:307.5px;font-size:7.3px;line-height:12px;font-weight:normal;color:#000;">Expense / Discretionary</div>
<div class="t s" style="right:603px;top:307.5px;font-size:7.3px;line-height:12px;font-weight:normal;color:#000;">93.83</div>
<div class="t s" style="left:17.6px;top:319.5px;font-size:7.3px;line-height:12px;font-weight:normal;color:#000;">Restaurants</div>
<div class="t s" style="left:117.6px;top:319.5px;font-size:7.3px;line-height:12px;font-weight:normal;color:#000;">Expense / Discretionary</div>
<div class="t s" style="right:603px;top:319.5px;font-size:7.3px;line-height:12px;font-weight:normal;color:#000;">678.45</div>
<div class="t s" style="left:17.6px;top:332.5px;font-size:7.3px;line-height:12px;font-weight:normal;color:#000;">Subscriptions</div>
<div class="t s" style="left:117.6px;top:332.5px;font-size:7.3px;line-height:12px;font-weight:normal;color:#000;">Expense / Discretionary</div>
<div class="t s" style="right:603px;top:332.5px;font-size:7.3px;line-height:12px;font-weight:normal;color:#000;">$127.33</div>
<div class="t s" style="left:17.6px;top:344.5px;font-size:7.3px;line-height:12px;font-weight:normal;color:#000;">Travel</div>
<div class="t s" style="left:117.6px;top:344.5px;font-size:7.3px;line-height:12px;font-weight:normal;color:#000;">Expense / Discretionary</div>
<div class="t s" style="right:603px;top:344.5px;font-size:7.3px;line-height:12px;font-weight:normal;color:#000;">$0.00</div>
<div class="t s" style="left:17.6px;top:357.5px;font-size:7.3px;line-height:12px;font-weight:normal;color:#000;">Yoga</div>
<div class="t s" style="left:117.6px;top:357.5px;font-size:7.3px;line-height:12px;font-weight:normal;color:#000;">Expense / Discretionary</div>
<div class="t s" style="right:603px;top:357.5px;font-size:7.3px;line-height:12px;font-weight:normal;color:#000;">$10.00</div>
<div class="t s" style="left:17.6px;top:370.5px;font-size:7.3px;line-height:12px;font-weight:normal;color:#000;">Donations</div>
<div class="t s" style="left:117.6px;top:370.5px;font-size:7.3px;line-height:12px;font-weight:normal;color:#000;">Expense / Giving</div>
<div class="t s" style="right:603px;top:370.5px;font-size:7.3px;line-height:12px;font-weight:normal;color:#000;">$330.00</div>
<div class="t s" style="left:17.6px;top:383.5px;font-size:7.3px;line-height:12px;font-weight:normal;color:#000;">Gifts</div>
<div class="t s" style="left:117.6px;top:383.5px;font-size:7.3px;line-height:12px;font-weight:normal;color:#000;">Expense / Giving</div>
<div class="t s" style="right:603px;top:383.5px;font-size:7.3px;line-height:12px;font-weight:normal;color:#000;">$233.97</div>
<div class="t s" style="left:17.6px;top:395.5px;font-size:7.3px;line-height:12px;font-weight:normal;color:#000;">Auto &amp; Gas</div>
<div class="t s" style="left:117.6px;top:395.5px;font-size:7.3px;line-height:12px;font-weight:normal;color:#000;">Expense / Living</div>
<div class="t s" style="right:603px;top:395.5px;font-size:7.3px;line-height:12px;font-weight:normal;color:#000;">$1,208.96</div>
<div class="t s" style="left:17.6px;top:408.5px;font-size:7.3px;line-height:12px;font-weight:normal;color:#000;">Groceries</div>
<div class="t s" style="left:117.6px;top:408.5px;font-size:7.3px;line-height:12px;font-weight:normal;color:#000;">Expense / Living</div>
<div class="t s" style="right:603px;top:408.5px;font-size:7.3px;line-height:12px;font-weight:normal;color:#000;">$2,817.68</div>
<div class="t s" style="left:17.6px;top:421.5px;font-size:7.3px;line-height:12px;font-weight:normal;color:#000;">Gym Membership</div>
<div class="t s" style="left:117.6px;top:421.5px;font-size:7.3px;line-height:12px;font-weight:normal;color:#000;">Expense / Living</div>
<div class="t s" style="right:603px;top:421.5px;font-size:7.3px;line-height:12px;font-weight:normal;color:#000;">$251.75</div>
<div class="t s" style="left:17.6px;top:433.5px;font-size:7.3px;line-height:12px;font-weight:normal;color:#000;">Health/Dental Insurance</div>
<div class="t s" style="left:117.6px;top:433.5px;font-size:7.3px;line-height:12px;font-weight:normal;color:#000;">Expense / Living</div>
<div class="t s" style="right:603px;top:433.5px;font-size:7.3px;line-height:12px;font-weight:normal;color:#000;">$431.40</div>
<div class="t s" style="left:17.6px;top:446.5px;font-size:7.3px;line-height:12px;font-weight:normal;color:#000;">Household</div>
<div class="t s" style="left:117.6px;top:446.5px;font-size:7.3px;line-height:12px;font-weight:normal;color:#000;">Expense / Living</div>
<div class="t s" style="right:603px;top:446.5px;font-size:7.3px;line-height:12px;font-weight:normal;color:#000;">$104.64</div>
<div class="t s" style="left:17.6px;top:459.5px;font-size:7.3px;line-height:12px;font-weight:normal;color:#000;">Misc</div>
<div class="t s" style="left:117.6px;top:459.5px;font-size:7.3px;line-height:12px;font-weight:normal;color:#000;">Expense / Living</div>
<div class="t s" style="right:603px;top:459.5px;font-size:7.3px;line-height:12px;font-weight:normal;color:#000;">$43.90</div>
<div class="t s" style="left:17.6px;top:471.5px;font-size:7.3px;line-height:12px;font-weight:normal;color:#000;">Pets</div>
<div class="t s" style="left:117.6px;top:471.5px;font-size:7.3px;line-height:12px;font-weight:normal;color:#000;">Expense / Living</div>
<div class="t s" style="right:603px;top:471.5px;font-size:7.3px;line-height:12px;font-weight:normal;color:#000;">$0.00</div>
<div class="t s" style="left:17.6px;top:484.5px;font-size:7.3px;line-height:12px;font-weight:normal;color:#000;">Rent</div>
<div class="t s" style="left:117.6px;top:484.5px;font-size:7.3px;line-height:12px;font-weight:normal;color:#000;">Expense / Living</div>
<div class="t s" style="right:603px;top:484.5px;font-size:7.3px;line-height:12px;font-weight:normal;color:#000;">$9,746.85</div>
<div class="t s" style="left:17.6px;top:497.5px;font-size:7.3px;line-height:12px;font-weight:normal;color:#000;">Paycheck</div>
<div class="t s" style="left:117.6px;top:497.5px;font-size:7.5px;line-height:12px;font-weight:normal;color:#000;width:80.6px;overflow:hidden;">Income / Primary Income</div>
<div class="t s" style="right:603px;top:497.5px;font-size:7.3px;line-height:12px;font-weight:normal;color:#000;">$51,634.00</div>
<div class="t s" style="left:17.6px;top:510.5px;font-size:7.3px;line-height:12px;font-weight:normal;color:#000;">Savings</div>
<div class="t s" style="left:117.6px;top:510.5px;font-size:7.3px;line-height:12px;font-weight:normal;color:#000;">Transfer / Savings</div>
<div class="t s" style="right:603px;top:510.5px;font-size:7.3px;line-height:12px;font-weight:normal;color:#000;">$0.00</div>
<div class="t s" style="left:17.6px;top:522.5px;font-size:7.3px;line-height:12px;font-weight:normal;color:#000;transform:scaleX(0.93);transform-origin:0 0;">CC Payment</div>
<div class="t s" style="left:117.6px;top:522.5px;font-size:7.3px;line-height:12px;font-weight:normal;color:#000;">Transfer / Transfers</div>
<div class="t s" style="right:603px;top:522.5px;font-size:7.3px;line-height:12px;font-weight:normal;color:#000;">-$3,607.50</div>
<div class="r" style="left:313.4px;top:114.9px;width:105.6px;height:10.8px;background:#6e7891;"></div>
<div class="t s" style="left:216.2px;width:300px;text-align:center;top:114.0px;font-size:8.8px;line-height:12px;font-weight:bold;color:#fff;transform:scaleX(0.97);transform-origin:50% 0;">Start Date</div>
<div class="r" style="left:313.4px;top:125.7px;width:105.6px;height:25.9px;background:#e7fde8;"></div>
<div class="t s" style="left:216.2px;width:300px;text-align:center;top:133.0px;font-size:12.2px;line-height:12px;font-weight:bold;color:#2c472b;-webkit-text-stroke:0;">1/1/21</div>
<div class="r" style="left:522.8px;top:114.9px;width:105.5px;height:10.8px;background:#6e7891;"></div>
<div class="t s" style="left:425.55px;width:300px;text-align:center;top:114.0px;font-size:8.8px;line-height:12px;font-weight:bold;color:#fff;transform:scaleX(0.97);transform-origin:50% 0;">End Date</div>
<div class="r" style="left:522.8px;top:125.7px;width:105.5px;height:25.9px;background:#e7fde8;"></div>
<div class="t s" style="left:425.55px;width:300px;text-align:center;top:133.0px;font-size:12.2px;line-height:12px;font-weight:bold;color:#2c472b;-webkit-text-stroke:0;">12/31/21</div>
<svg width="44" height="12" style="left:449.6px;top:118.1px"><path d="M3.4 6.5 H8.6 M11.2 6.5 H15.4 M18 6.5 H22.2 M24.8 6.5 H29 M31.6 6.5 H38.8" stroke="#6b7691" stroke-width="1.4"/><path d="M6.4 2.4 L2 6.5 L6.4 10.6 M35.8 2.4 L40.2 6.5 L35.8 10.6" fill="none" stroke="#6b7691" stroke-width="1.4"/></svg>
<div class="r" style="left:313.4px;top:164px;width:315.1px;height:13.9px;background:#6e7891;"></div>
<div class="t s" style="left:216px;width:300px;text-align:center;top:166.0px;font-size:8.7px;line-height:12px;font-weight:bold;color:#fff;transform:scaleX(0.94);transform-origin:50% 0;">Category or Group</div>
<div class="t s" style="left:321px;width:300px;text-align:center;top:166.0px;font-size:8.7px;line-height:12px;font-weight:bold;color:#fff;transform:scaleX(0.94);transform-origin:50% 0;">Income or Expense</div>
<div class="t s" style="left:425.5px;width:300px;text-align:center;top:166.0px;font-size:8.7px;line-height:12px;font-weight:bold;color:#fff;transform:scaleX(0.94);transform-origin:50% 0;">Count</div>
<div class="r" style="left:313.4px;top:177.9px;width:315.1px;height:12.7px;background:#e7fde8;"></div>
<div class="t s" style="left:216px;width:300px;text-align:center;top:179.0px;font-size:8.3px;line-height:12px;font-weight:normal;color:#2a422a;">Category</div>
<div class="t s" style="left:321px;width:300px;text-align:center;top:179.0px;font-size:8.3px;line-height:12px;font-weight:normal;color:#2a422a;">Expense</div>
<div class="t s" style="left:425.5px;width:300px;text-align:center;top:179.0px;font-size:8.3px;line-height:12px;font-weight:normal;color:#2a422a;">10</div>
<div class="r" style="left:628.9px;top:166.1px;width:10.1px;height:10.3px;background:#fdfdfd;border:0.9px solid #bdbdbd;box-sizing:border-box;"></div>
<svg width="8" height="6" style="left:630.8px;top:170px"><path d="M0 0 H5.6 L2.8 3.5 Z" fill="#666"/></svg>
<div class="r" style="left:643px;top:163.6px;width:229.6px;height:14.3px;background:#6e7891;"></div>
<div class="t s" style="left:645px;top:166.0px;font-size:8.7px;line-height:12px;font-weight:bold;color:#fff;transform:scaleX(0.94);transform-origin:0 0;">Category</div>
<div class="t s" style="left:810px;top:166.0px;font-size:8.7px;line-height:12px;font-weight:bold;color:#fff;transform:scaleX(0.94);transform-origin:0 0;">Period Total</div>
<div class="r" style="left:643px;top:177.9px;width:165px;height:13.2px;background:#e7fde8;"></div>
<div class="r" style="left:808px;top:177.9px;width:64.6px;height:13.2px;background:#e8e8ef;"></div>
<div class="t s" style="left:645.8px;top:179.0px;font-size:8.9px;line-height:12px;font-weight:normal;color:#2a422a;-webkit-text-stroke:0;">Utilities</div>
<div class="t s" style="left:812px;top:179.0px;font-size:8.3px;line-height:12px;font-weight:normal;color:#000;">$</div>
<div class="t s" style="right:29.4px;top:179.0px;font-size:8.3px;line-height:12px;font-weight:normal;color:#000;">(1,177.07)</div>
<div class="r" style="left:643px;top:203.2px;width:229.6px;height:13.2px;background:#6e7891;"></div>
<div class="t s" style="left:645px;top:205.0px;font-size:8.7px;line-height:12px;font-weight:bold;color:#fff;transform:scaleX(0.94);transform-origin:0 0;">Description</div>
<div class="t s" style="left:810px;top:205.0px;font-size:8.7px;line-height:12px;font-weight:bold;color:#fff;transform:scaleX(0.94);transform-origin:0 0;">Total</div>
<div class="t s" style="left:645.2px;top:218.5px;font-size:7.25px;line-height:12px;font-weight:normal;color:#000;">Dominion Energy</div>
<div class="t s" style="left:813px;top:218.5px;font-size:7.25px;line-height:12px;font-weight:normal;color:#000;">$</div>
<div class="t s" style="right:29.4px;top:218.5px;font-size:7.25px;line-height:12px;font-weight:normal;color:#000;">(324.68)</div>
<div class="t s" style="left:645.2px;top:230.5px;font-size:7.25px;line-height:12px;font-weight:normal;color:#000;">Duke Energy</div>
<div class="t s" style="left:813px;top:230.5px;font-size:7.25px;line-height:12px;font-weight:normal;color:#000;">$</div>
<div class="t s" style="right:29.4px;top:230.5px;font-size:7.25px;line-height:12px;font-weight:normal;color:#000;">(447.62)</div>
<div class="t s" style="left:645.2px;top:243.5px;font-size:7.25px;line-height:12px;font-weight:normal;color:#000;">Optimum Internet</div>
<div class="t s" style="left:813px;top:243.5px;font-size:7.25px;line-height:12px;font-weight:normal;color:#000;">$</div>
<div class="t s" style="right:29.4px;top:243.5px;font-size:7.25px;line-height:12px;font-weight:normal;color:#000;">(89.90)</div>
<div class="t s" style="left:645.2px;top:256.5px;font-size:7.25px;line-height:12px;font-weight:normal;color:#000;">Spectrum</div>
<div class="t s" style="left:813px;top:256.5px;font-size:7.25px;line-height:12px;font-weight:normal;color:#000;">$</div>
<div class="t s" style="right:29.4px;top:256.5px;font-size:7.25px;line-height:12px;font-weight:normal;color:#000;">(314.87)</div>
<div class="r" style="left:829.6px;top:114.9px;width:40.6px;height:17.3px;background:#2b78d6;"></div>
<div class="t s" style="left:833.1px;top:118.0px;font-size:14.9px;line-height:12px;font-weight:bold;color:#fff;transform:scaleX(0.95);transform-origin:0 0;letter-spacing:-0.35px;-webkit-text-stroke:0;">tiller</div>
<svg width="8" height="8" style="left:862px;top:116.5px"><path d="M1 1 H6 V6 Z" fill="#fff"/></svg>
<div class="r" style="left:829.6px;top:132.2px;width:40.6px;height:9.5px;background:#fff;border:0.9px solid #2b78d6;box-sizing:border-box;"></div>
<div class="t s" style="left:700.1px;width:300px;text-align:center;top:131.0px;font-size:5.2px;line-height:12px;font-weight:bold;color:#2b78d6;letter-spacing:0.45px;">COMMUNITY</div>
<div class="t s" style="left:699.9px;width:300px;text-align:center;top:139.0px;font-size:5.6px;line-height:12px;font-weight:normal;color:#6d7484;text-decoration:underline;text-decoration-thickness:0.5px;text-underline-offset:0.6px;">Learn &amp; Discuss</div>
<svg width="900" height="563" style="left:0;top:0"><path d="M470.7 371.4 L470.70 241.30 A130.1 130.1 0 1 1 430.23 495.05 Z" fill="#3c69bd" stroke="#fff" stroke-width="1.1" stroke-linejoin="round"/><path d="M470.7 371.4 L430.23 495.05 A130.1 130.1 0 0 1 344.80 404.20 Z" fill="#e8742c" stroke="#fff" stroke-width="1.1" stroke-linejoin="round"/><path d="M470.7 371.4 L344.80 404.20 A130.1 130.1 0 0 1 342.57 348.87 Z" fill="#a0a0a0" stroke="#fff" stroke-width="1.1" stroke-linejoin="round"/><path d="M470.7 371.4 L342.57 348.87 A130.1 130.1 0 0 1 362.71 298.84 Z" fill="#fcb900" stroke="#fff" stroke-width="1.1" stroke-linejoin="round"/><path d="M470.7 371.4 L362.71 298.84 A130.1 130.1 0 0 1 388.58 270.49 Z" fill="#4f8fd0" stroke="#fff" stroke-width="1.1" stroke-linejoin="round"/><path d="M470.7 371.4 L388.58 270.49 A130.1 130.1 0 0 1 415.00 253.83 Z" fill="#68a540" stroke="#fff" stroke-width="1.1" stroke-linejoin="round"/><path d="M470.7 371.4 L415.00 253.83 A130.1 130.1 0 0 1 433.57 246.71 Z" fill="#24407a" stroke="#fff" stroke-width="1.1" stroke-linejoin="round"/><path d="M470.7 371.4 L433.57 246.71 A130.1 130.1 0 0 1 448.39 243.23 Z" fill="#9b4513" stroke="#fff" stroke-width="1.1" stroke-linejoin="round"/><path d="M470.7 371.4 L448.39 243.23 A130.1 130.1 0 0 1 459.91 241.75 Z" fill="#5c5c5c" stroke="#fff" stroke-width="1.1" stroke-linejoin="round"/><path d="M470.7 371.4 L459.91 241.75 A130.1 130.1 0 0 1 470.70 241.30 Z" fill="#9a7208" stroke="#fff" stroke-width="1.1" stroke-linejoin="round"/><path d="M522 212.2 L466.4 241" fill="none" stroke="#a0a0a0" stroke-width="0.8"/><path d="M431 228 L435 229.8 L440 243.4" fill="none" stroke="#a0a0a0" stroke-width="0.8"/><path d="M400.7 234.5 L423.8 249.8" fill="none" stroke="#a0a0a0" stroke-width="0.8"/><path d="M392.5 249.8 L396.4 250.2 L401.4 259.7" fill="none" stroke="#a0a0a0" stroke-width="0.8"/><path d="M363.3 276.4 L375 283.6" fill="none" stroke="#a0a0a0" stroke-width="0.8"/><path d="M455.2 234.8 L454.3 242.3" fill="none" stroke="#a0a0a0" stroke-width="0.8"/></svg>
<div class="t s" style="left:524px;top:204.5px;font-size:7.35px;line-height:12px;font-weight:normal;color:#454545;">Gifts, $233.97</div>
<div class="t s" style="left:314.3px;width:300px;text-align:center;top:206.5px;font-size:7.35px;line-height:12px;font-weight:normal;color:#454545;">Gym</div>
<div class="t s" style="left:314.3px;width:300px;text-align:center;top:216.5px;font-size:7.35px;line-height:12px;font-weight:normal;color:#454545;">Membership,</div>
<div class="t s" style="left:314.3px;width:300px;text-align:center;top:225.5px;font-size:7.35px;line-height:12px;font-weight:normal;color:#454545;">$251.75</div>
<div class="t s" style="left:267.4px;width:300px;text-align:center;top:210.5px;font-size:7.35px;line-height:12px;font-weight:normal;color:#454545;">Donations,</div>
<div class="t s" style="left:267.4px;width:300px;text-align:center;top:220.5px;font-size:7.35px;line-height:12px;font-weight:normal;color:#454545;">$330.00</div>
<div class="t s" style="left:209px;width:300px;text-align:center;top:216.5px;font-size:7.35px;line-height:12px;font-weight:normal;color:#454545;">Health/Dental</div>
<div class="t s" style="left:209px;width:300px;text-align:center;top:225.5px;font-size:7.35px;line-height:12px;font-weight:normal;color:#454545;">Insurance,</div>
<div class="t s" style="left:209px;width:300px;text-align:center;top:235.5px;font-size:7.35px;line-height:12px;font-weight:normal;color:#454545;">$431.40</div>
<div class="t s" style="left:221px;width:300px;text-align:center;top:242.5px;font-size:7.35px;line-height:12px;font-weight:normal;color:#454545;">Restaurants,</div>
<div class="t s" style="left:221px;width:300px;text-align:center;top:251.5px;font-size:7.35px;line-height:12px;font-weight:normal;color:#454545;">$678.45</div>
<div class="t s" style="left:194px;width:300px;text-align:center;top:269.5px;font-size:7.35px;line-height:12px;font-weight:normal;color:#454545;">Cell Phone,</div>
<div class="t s" style="left:194px;width:300px;text-align:center;top:278.5px;font-size:7.35px;line-height:12px;font-weight:normal;color:#454545;">$834.49</div>
<div class="t s" style="left:214px;width:300px;text-align:center;top:335.5px;font-size:7.35px;line-height:12px;font-weight:normal;color:#454545;">Utilities,</div>
<div class="t s" style="left:214px;width:300px;text-align:center;top:344.5px;font-size:7.35px;line-height:12px;font-weight:normal;color:#454545;">$1,177.07</div>
<div class="t s" style="left:212.6px;width:300px;text-align:center;top:365.5px;font-size:7.35px;line-height:12px;font-weight:normal;color:#454545;">Auto &amp; Gas,</div>
<div class="t s" style="left:212.6px;width:300px;text-align:center;top:374.5px;font-size:7.35px;line-height:12px;font-weight:normal;color:#454545;">$1,208.96</div>
<div class="t s" style="left:544px;top:382.5px;font-size:7.35px;line-height:12px;font-weight:normal;color:#454545;">Rent, $9,746.85</div>
<div class="t s" style="left:239px;width:300px;text-align:center;top:433.5px;font-size:7.35px;line-height:12px;font-weight:normal;color:#454545;">Groceries,</div>
<div class="t s" style="left:239px;width:300px;text-align:center;top:442.5px;font-size:7.35px;line-height:12px;font-weight:normal;color:#454545;">$2,817.68</div>
<div class="t s" style="left:8.8px;top:550.5px;font-size:7.0px;line-height:12px;font-weight:normal;color:#444;">Calculation Mode: Automatic</div>
<div class="t s" style="left:108.4px;top:550.5px;font-size:7.0px;line-height:12px;font-weight:normal;color:#444;">Workbook Statistics</div>
<svg width="6" height="4" style="left:711.5px;top:555.3px"><path d="M0.2 0.3 H4.6 L2.4 2.8 Z" fill="#666"/></svg>
<div class="t s" style="left:740.6px;top:550.5px;font-size:6.85px;line-height:12px;font-weight:normal;color:#333;">Give Feedback to Microsoft</div>
<div class="r" style="left:848.7px;top:556.3px;width:7.4px;height:0.8px;background:#444;"></div>
<div class="t s" style="left:862px;top:550.5px;font-size:6.8px;line-height:12px;font-weight:normal;color:#333;">100%</div>
<div class="r" style="left:882.6px;top:556.3px;width:7px;height:0.8px;background:#444;"></div>
<div class="r" style="left:885.7px;top:553.2px;width:0.8px;height:7px;background:#444;"></div>
</div></body></html>
